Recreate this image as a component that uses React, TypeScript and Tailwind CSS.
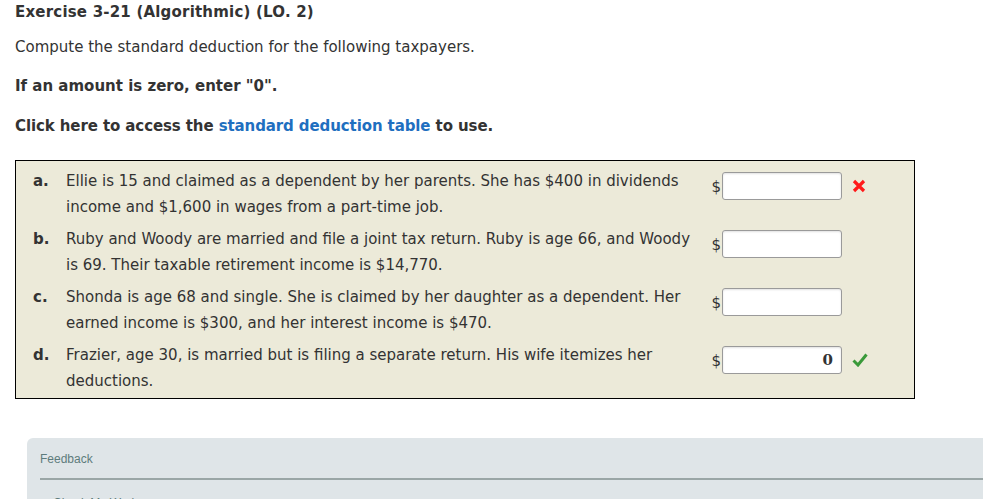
import React from "react";

const rows = [
  {
    label: "a.",
    lines: [
      "Ellie is 15 and claimed as a dependent by her parents. She has $400 in dividends",
      "income and $1,600 in wages from a part-time job.",
    ],
    value: "",
    mark: "wrong",
  },
  {
    label: "b.",
    lines: [
      "Ruby and Woody are married and file a joint tax return. Ruby is age 66, and Woody",
      "is 69. Their taxable retirement income is $14,770.",
    ],
    value: "",
    mark: "",
  },
  {
    label: "c.",
    lines: [
      "Shonda is age 68 and single. She is claimed by her daughter as a dependent. Her",
      "earned income is $300, and her interest income is $470.",
    ],
    value: "",
    mark: "",
  },
  {
    label: "d.",
    lines: [
      "Frazier, age 30, is married but is filing a separate return. His wife itemizes her",
      "deductions.",
    ],
    value: "0",
    mark: "right",
  },
];

function WrongMark() {
  return (
    <svg width="14" height="14" viewBox="0 0 14 14">
      <path d="M2 2 L12 12 M12 2 L2 12" stroke="#ff1a1a" strokeWidth="3.2" strokeLinecap="butt" />
    </svg>
  );
}

function RightMark() {
  return (
    <svg width="16" height="14" viewBox="0 0 16 14">
      <path d="M1.5 7.5 L6 12 L14.5 1.5" fill="none" stroke="#3a9a3a" strokeWidth="3" strokeLinejoin="miter" />
    </svg>
  );
}

export default function App() {
  return (
    <div className="w-[983px] h-[499px] overflow-hidden bg-white text-[#333] text-[15px] leading-[20px] font-['DejaVu_Sans',Verdana,sans-serif]">
      <div className="pl-[15px] pt-[2px]">
        <h1 className="font-bold text-[15px] tracking-[0.2px]">Exercise 3-21 (Algorithmic) (LO. 2)</h1>

        <p className="mt-[15px]">Compute the standard deduction for the following taxpayers.</p>

        <p className="mt-[19px] font-bold">If an amount is zero, enter "0".</p>

        <p className="mt-[20px] font-bold tracking-[-0.1px]">
          Click here to access the <span className="text-[#1f6fc0]">standard deduction table</span> to use.
        </p>

        <div className="mt-[24px] w-[900px] border border-black bg-[#ecead9] pt-[7px] pb-[4px] flex flex-col gap-[6px]">
          {rows.map((row) => (
            <div key={row.label} className="flex items-start">
              <div className="w-[50px] pl-[17px] font-bold leading-[26px]">{row.label}</div>
              <div className="w-[644px] leading-[26px] whitespace-nowrap">
                {row.lines.map((line) => (
                  <div key={line}>{line}</div>
                ))}
              </div>
              <div className="flex items-center mt-[3px]">
                <span className="w-[11px] text-right leading-[28px] mt-[2px]">$</span>
                <div className="w-[120px] h-[28px] ml-[1px] rounded-[3px] border border-[#9a9a9a] bg-white shadow-[inset_0_1px_2px_rgba(0,0,0,0.12)] flex items-center justify-end pr-[8px] font-bold font-['DejaVu_Serif',serif] text-[#333]">
                  {row.value}
                </div>
                <div className="ml-[10px] w-[16px] flex items-center">
                  {row.mark === "wrong" && <WrongMark />}
                  {row.mark === "right" && <RightMark />}
                </div>
              </div>
            </div>
          ))}
        </div>

        <div className="mt-[39px] ml-[12px] w-[1000px] h-[80px] rounded-tl-[6px] bg-[#dfe5e8] pl-[13px] pt-[13px] font-['Liberation_Sans',Arial,sans-serif]">
          <div className="text-[12px] leading-[16px] text-[#5e7c7c]">Feedback</div>
          <div className="mt-[11px] border-t-[2px] border-[#9aa6a6]" />
          <div className="mt-[15px] flex items-center gap-[4px] text-[12px] leading-[16px] text-[#5e7c7c]">
            <span className="inline-block w-[9px] h-[9px] bg-[#5e7c7c]" />
            Check My Work
          </div>
        </div>
      </div>
    </div>
  );
}
